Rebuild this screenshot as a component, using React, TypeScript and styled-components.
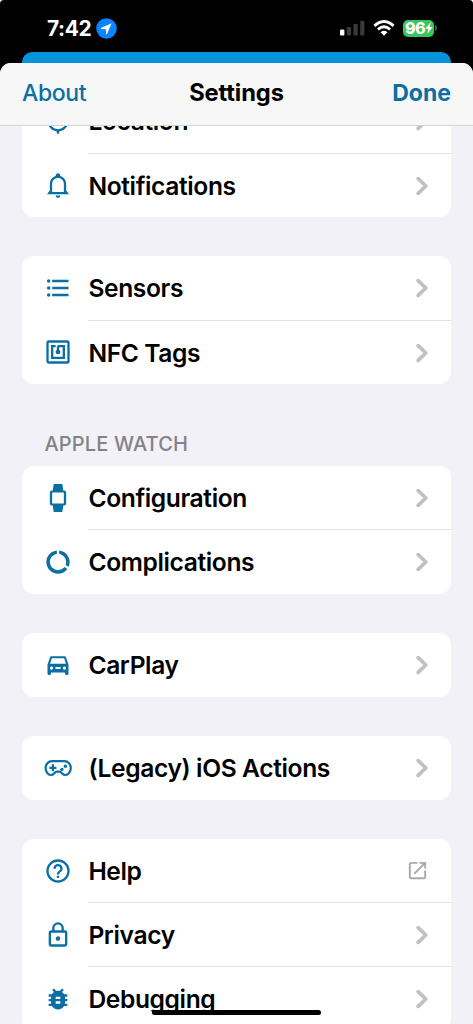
import React from "react";
import styled, { createGlobalStyle } from "styled-components";

const BLUE = "#0b6fa4";

const GlobalStyle = createGlobalStyle`
  * { box-sizing: border-box; }
  html, body { margin: 0; padding: 0; background: #fff; }
  body { font-family: Inter, "Liberation Sans", sans-serif; overflow: hidden; }
`;

const Phone = styled.div`
  width: 473px;
  height: 1024px;
  display: flex;
  flex-direction: column;
  background: #000;
  overflow: hidden;
  position: relative;
  border-radius: 4px 4px 0 0;
`;

const StatusBar = styled.header`
  flex: none;
  height: 52px;
  display: flex;
  align-items: center;
  justify-content: space-between;
  padding: 4px 36px 0 47px;
  color: #fff;
`;

const Clock = styled.div`
  display: flex;
  align-items: center;
  gap: 5px;
  padding-top: 1px;
  font-size: 21px;
  font-weight: 700;
  letter-spacing: -0.4px;
  line-height: 22px;
  svg { display: block; }
`;

const Indicators = styled.div`
  display: flex;
  align-items: center;
  svg { display: block; }
`;

const Signal = styled.svg`
  margin-right: 8px;
`;

const Battery = styled.div`
  display: flex;
  align-items: center;
  margin-left: 8px;
`;

const BatteryBody = styled.div`
  width: 31px;
  height: 17px;
  border-radius: 5px;
  background: #34c759;
  display: flex;
  align-items: center;
  padding-left: 2px;
  font-size: 16px;
  font-weight: 800;
  letter-spacing: -0.5px;
  line-height: 17px;
`;

const BatteryCap = styled.div`
  width: 2px;
  height: 6px;
  margin-left: 1px;
  border-radius: 0 2px 2px 0;
  background: #4b4b4d;
`;

const BackCard = styled.div`
  flex: none;
  height: 11px;
  margin: 0 22px;
  background: #0593d9;
  border-radius: 10px 10px 0 0;
`;

const Sheet = styled.main`
  flex: 1;
  min-height: 0;
  display: flex;
  flex-direction: column;
  background: #f2f1f7;
  border-radius: 11px 11px 0 0;
  overflow: hidden;
`;

const NavBar = styled.nav`
  flex: none;
  height: 63px;
  display: grid;
  grid-template-columns: 1fr auto 1fr;
  align-items: center;
  padding: 0 22px 3px 22px;
  background: #f7f7f8;
  border-bottom: 1px solid #d4d4d7;
`;

const Title = styled.h1`
  margin: 0;
  font-size: 23.7px;
  font-weight: 700;
  letter-spacing: -0.1px;
  color: #000;
`;

const NavButton = styled.button<{ $strong?: boolean }>`
  border: 0;
  padding: 0;
  background: none;
  font: inherit;
  font-size: 23px;
  font-weight: ${(p) => (p.$strong ? 700 : 500)};
  letter-spacing: ${(p) => (p.$strong ? "0" : "-0.4px")};
  color: ${BLUE};
  justify-self: ${(p) => (p.$strong ? "end" : "start")};
`;

const Scroller = styled.div`
  flex: 1;
  min-height: 0;
  overflow: hidden;
  display: flex;
  flex-direction: column;
  justify-content: flex-start;
  padding: 0 22px;
`;

const Section = styled.section<{ $gap?: number }>`
  flex: none;
  margin-top: ${(p) => p.$gap ?? 39}px;
`;

const SectionTitle = styled.h2`
  margin: 0;
  height: 43px;
  padding: 10px 0 0 22.5px;
  font-size: 20px;
  line-height: 22px;
  font-weight: 500;
  letter-spacing: 0.15px;
  color: #838288;
`;

const RowContent = styled.div`
  flex: 1;
  align-self: stretch;
  display: flex;
  align-items: center;
  justify-content: space-between;
  margin-left: 16px;
  padding-right: 22px;
  svg { display: block; }
`;

const RowBox = styled.div`
  height: 64px;
  display: flex;
  align-items: center;
  padding-left: 22px;
  > svg { flex: none; display: block; }
`;

const Card = styled.div<{ $rule?: "top" | "bottom" }>`
  background: #fff;
  border-radius: 12px;
  overflow: hidden;

  ${(p) =>
    p.$rule === "top"
      ? `${RowBox}:not(:first-child) > ${RowContent} { border-top: 1px solid #e1e1e4; }`
      : `${RowBox}:not(:last-child) > ${RowContent} { border-bottom: 1px solid #e1e1e4; }`}
`;

const Label = styled.span`
  padding-left: 0.4px;
  font-size: 24.6px;
  line-height: 32px;
  font-weight: 580;
  letter-spacing: -0.38px;
  color: #000;
  white-space: nowrap;
`;

const HomeIndicator = styled.div`
  position: absolute;
  left: 152px;
  bottom: 9px;
  width: 169px;
  height: 5.5px;
  border-radius: 3px;
  background: #000;
`;

const icons = {
  location:
    "M12,8A4,4 0 0,1 16,12A4,4 0 0,1 12,16A4,4 0 0,1 8,12A4,4 0 0,1 12,8M3.05,13H1V11H3.05C3.5,6.83 6.83,3.5 11,3.05V1H13V3.05C17.17,3.5 20.5,6.83 20.95,11H23V13H20.95C20.5,17.17 17.17,20.5 13,20.95V23H11V20.95C6.83,20.5 3.5,17.17 3.05,13M12,5A7,7 0 0,0 5,12A7,7 0 0,0 12,19A7,7 0 0,0 19,12A7,7 0 0,0 12,5Z",
  bell: "M10 21H14C14 22.1 13.1 23 12 23S10 22.1 10 21M21 19V20H3V19L5 17V11C5 7.9 7 5.2 10 4.3V4C10 2.9 10.9 2 12 2S14 2.9 14 4V4.3C17 5.2 19 7.9 19 11V17L21 19M17 11C17 8.2 14.8 6 12 6S7 8.2 7 11V18H17V11Z",
  list: "M7,5H21V7H7V5M7,13V11H21V13H7M4,4.5A1.5,1.5 0 0,1 5.5,6A1.5,1.5 0 0,1 4,7.5A1.5,1.5 0 0,1 2.5,6A1.5,1.5 0 0,1 4,4.5M4,10.5A1.5,1.5 0 0,1 5.5,12A1.5,1.5 0 0,1 4,13.5A1.5,1.5 0 0,1 2.5,12A1.5,1.5 0 0,1 4,10.5M7,19V17H21V19H7M4,16.5A1.5,1.5 0 0,1 5.5,18A1.5,1.5 0 0,1 4,19.5A1.5,1.5 0 0,1 2.5,18A1.5,1.5 0 0,1 4,16.5Z",
  nfc: "M18,6H13A2,2 0 0,0 11,8V10.28C10.41,10.62 10,11.26 10,12A2,2 0 0,0 12,14C13.11,14 14,13.1 14,12C14,11.26 13.6,10.62 13,10.28V8H16V16H8V8H10V6H6V18H18ZM20,20H4V4H20ZM20,2H4A2,2 0 0,0 2,4V20A2,2 0 0,0 4,22H20C21.11,22 22,21.1 22,20V4C22,2.89 21.11,2 20,2Z",
  watch:
    "M8.3,0H15.7L16.5,5.5H17.2A1.8,1.8 0 0,1 19,7.3V16.7A1.8,1.8 0 0,1 17.2,18.5H16.5L15.7,24H8.3L7.5,18.5H6.8A1.8,1.8 0 0,1 5,16.7V7.3A1.8,1.8 0 0,1 6.8,5.5H7.5ZM7,7.3V16.7H17V7.3Z",
  donut:
    "M13,2.05V5.08C16.39,5.57 19,8.47 19,12C19,12.9 18.82,13.75 18.5,14.54L21.12,16.07C21.68,14.83 22,13.45 22,12C22,6.82 18.05,2.55 13,2.05M12,19A7,7 0 0,1 5,12C5,8.47 7.61,5.57 11,5.08V2.05C5.94,2.55 2,6.81 2,12A10,10 0 0,0 12,22C15.3,22 18.23,20.39 20.05,17.91L17.45,16.38C16.17,18 14.21,19 12,19Z",
  car: "M18.92,5.5C18.72,4.92 18.16,4.5 17.5,4.5H6.5C5.84,4.5 5.28,4.92 5.08,5.5L3,11.5V19.5A1,1 0 0,0 4,20.5H5A1,1 0 0,0 6,19.5V18.5H18V19.5A1,1 0 0,0 19,20.5H20A1,1 0 0,0 21,19.5V11.5ZM6.7,6.2H17.3L18.8,11H5.2ZM6.5,13.2A1.4,1.4 0 0,1 6.5,16A1.4,1.4 0 0,1 6.5,13.2M17.5,13.2A1.4,1.4 0 0,1 17.5,16A1.4,1.4 0 0,1 17.5,13.2M9.8,13.7H14.2V15.5H9.8Z",
  help: "M11,18H13V16H11V18M12,2A10,10 0 0,0 2,12A10,10 0 0,0 12,22A10,10 0 0,0 22,12A10,10 0 0,0 12,2M12,20C7.59,20 4,16.41 4,12C4,7.59 7.59,4 12,4C16.41,4 20,7.59 20,12C20,16.41 16.41,20 12,20M12,6A4,4 0 0,0 8,10H10A2,2 0 0,1 12,8A2,2 0 0,1 14,10C14,12 11,11.75 11,15H13C13,12.75 16,12.5 16,10A4,4 0 0,0 12,6Z",
  lock: "M12,17C10.89,17 10,16.1 10,15C10,13.89 10.89,13 12,13A2,2 0 0,1 14,15A2,2 0 0,1 12,17M18,20V10H6V20H18M18,8A2,2 0 0,1 20,10V20A2,2 0 0,1 18,22H6C4.89,22 4,21.1 4,20V10C4,8.89 4.89,8 6,8H7V6A5,5 0 0,1 12,1A5,5 0 0,1 17,6V8H18M12,3A3,3 0 0,0 9,6V8H15V6A3,3 0 0,0 12,3Z",
  bug: "M14,12H10V10H14M14,16H10V14H14M20,8H17.19C16.74,7.22 16.12,6.55 15.37,6.04L17,4.41L15.59,3L13.42,5.17C12.96,5.06 12.5,5 12,5C11.5,5 11.04,5.06 10.59,5.17L8.41,3L7,4.41L8.62,6.04C7.88,6.55 7.26,7.22 6.81,8H4V10H6.09C6.04,10.33 6,10.66 6,11V12H4V14H6V15C6,15.34 6.04,15.67 6.09,16H4V18H6.81C7.85,19.79 9.78,21 12,21C14.22,21 16.15,19.79 17.19,18H20V16H17.91C17.96,15.67 18,15.34 18,15V14H20V12H18V11C18,10.66 17.96,10.33 17.91,10H20V8Z",
};

type IconName = keyof typeof icons | "gamepad";

const RowIcon = ({ name }: { name: IconName }) =>
  name === "gamepad" ? (
    <svg width="28" height="28" viewBox="0 0 28 28" fill="none" stroke={BLUE} strokeWidth="2.2">
      <path d="M8 7.1H20.4A6.5 6.6 0 0 1 26.8 13.9C26.8 17.8 24.3 21 21.2 21C18.2 21 17.8 17.6 15.4 17.6H12.8C10.4 17.6 10 21 7 21C3.9 21 1.6 17.8 1.6 13.9A6.5 6.6 0 0 1 8 7.1Z" />
      <path d="M8.9 10.3V17.3M5.4 13.8H12.4" />
      <g fill={BLUE} stroke="none">
        <circle cx="21.4" cy="12.2" r="1.7" />
        <circle cx="17.9" cy="15.4" r="1.7" />
      </g>
    </svg>
  ) : (
    <svg width="28" height="28" viewBox="0 0 24 24" fill={BLUE} fillRule="evenodd">
      <path d={icons[name]} />
    </svg>
  );

const Chevron = () => (
  <svg width="14" height="20" viewBox="0 0 14 20" fill="none" stroke="#c1c1c3" strokeWidth="3.7" strokeLinecap="round" strokeLinejoin="round">
    <path d="M3.2 2.6L10.8 10L3.2 17.4" />
  </svg>
);

const External = () => (
  <svg width="23" height="23" viewBox="0 0 24 24" fill="#a9a9ab">
    <path d="M14,3V5H17.59L7.76,14.83L9.17,16.24L19,6.41V10H21V3M19,19H5V5H12V3H5C3.89,3 3,3.9 3,5V19A2,2 0 0,0 5,21H19A2,2 0 0,0 21,19V12H19V19Z" />
  </svg>
);

interface RowProps {
  icon: IconName;
  label: string;
  external?: boolean;
}

const Row = ({ icon, label, external }: RowProps) => (
  <RowBox>
    <RowIcon name={icon} />
    <RowContent>
      <Label>{label}</Label>
      {external ? <External /> : <Chevron />}
    </RowContent>
  </RowBox>
);

export default function App() {
  return (
    <Phone>
      <GlobalStyle />
      <StatusBar>
        <Clock>
          7:42
          <svg width="21" height="21" viewBox="0 0 21 21">
            <circle cx="10.5" cy="10.5" r="10.3" fill="#0a84ff" />
            <path d="M15.7 5.3L4.9 10Q4.2 10.6 5 10.9L9.8 11.2L10.1 16Q10.4 16.8 11 16.1Z" fill="#fff" />
          </svg>
        </Clock>
        <Indicators>
          <Signal width="25" height="16" viewBox="0 0 25 16">
            <rect x="0" y="9.5" width="4.4" height="6" rx="1.2" fill="#fff" />
            <g fill="#3a3a3c">
              <rect x="6.8" y="7" width="4.2" height="8.5" rx="1.2" />
              <rect x="13.5" y="4" width="4.2" height="11.5" rx="1.2" />
              <rect x="20.2" y="0.8" width="4.2" height="14.7" rx="1.2" />
            </g>
          </Signal>
          <svg width="22" height="16" viewBox="0 0 22 16" fill="none" stroke="#fff" strokeWidth="2.9">
            <path d="M1.4 5.8Q11 -2.8 20.6 5.8" />
            <path d="M4.9 9.5Q11 3.9 17.1 9.5" />
            <path d="M7.5 12.2Q11 9.3 14.5 12.2L11 15.7Z" fill="#fff" stroke="none" />
          </svg>
          <Battery>
            <BatteryBody>
              96
              <svg width="8" height="12" viewBox="0 0 8 12" fill="#fff">
                <path d="M5.8 0L0.3 6.8H3.4L2.2 12L7.7 5.1H4.6Z" />
              </svg>
            </BatteryBody>
            <BatteryCap />
          </Battery>
        </Indicators>
      </StatusBar>
      <BackCard />
      <Sheet>
        <NavBar>
          <NavButton>About</NavButton>
          <Title>Settings</Title>
          <NavButton $strong>Done</NavButton>
        </NavBar>
        <Scroller>
          <Section $gap={-37}>
            <Card $rule="top">
              <Row icon="location" label="Location" />
              <Row icon="bell" label="Notifications" />
            </Card>
          </Section>
          <Section>
            <Card $rule="top">
              <Row icon="list" label="Sensors" />
              <Row icon="nfc" label="NFC Tags" />
            </Card>
          </Section>
          <Section>
            <SectionTitle>APPLE WATCH</SectionTitle>
            <Card>
              <Row icon="watch" label="Configuration" />
              <Row icon="donut" label="Complications" />
            </Card>
          </Section>
          <Section>
            <Card>
              <Row icon="car" label="CarPlay" />
            </Card>
          </Section>
          <Section>
            <Card>
              <Row icon="gamepad" label="(Legacy) iOS Actions" />
            </Card>
          </Section>
          <Section>
            <Card>
              <Row icon="help" label="Help" external />
              <Row icon="lock" label="Privacy" />
              <Row icon="bug" label="Debugging" />
            </Card>
          </Section>
        </Scroller>
      </Sheet>
      <HomeIndicator />
    </Phone>
  );
}
